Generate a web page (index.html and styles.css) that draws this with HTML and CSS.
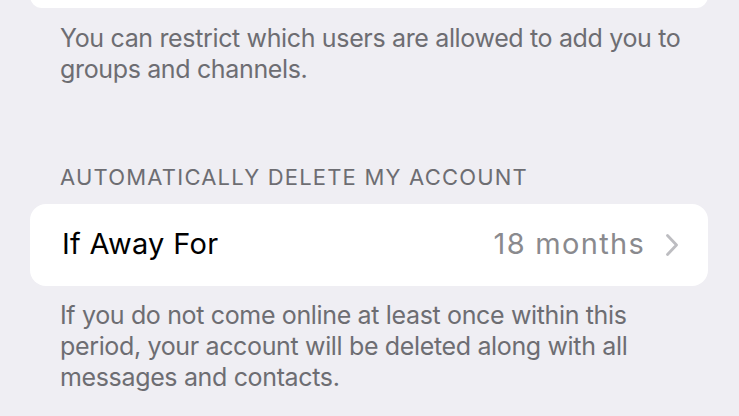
FILE: index.html
```html
<!DOCTYPE html>
<html>
<head>
<meta charset="utf-8">
<link rel="stylesheet" href="styles.css">
</head>
<body>
<div class="page">
  <div class="card card-top"></div>
  <p class="footer footer-top">You can restrict which users are allowed to add you to groups and channels.</p>
  <div class="header">AUTOMATICALLY DELETE MY ACCOUNT</div>
  <div class="card row">
    <span class="label">If Away For</span>
    <span class="value">18 months</span>
    <svg class="chevron" width="15" height="24" viewBox="0 0 15 24"><path d="M2.5 2.5 L11.5 12 L2.5 21.5" fill="none" stroke="#bdbdc1" stroke-width="2.8" stroke-linecap="round" stroke-linejoin="round"/></svg>
  </div>
  <p class="footer footer-bottom">If you do not come online at least once within this period, your account will be deleted along with all messages and contacts.</p>
</div>
</body>
</html>
```
FILE: styles.css
```css
html, body {
  margin: 0;
  padding: 0;
  background: #efeef3;
  font-family: Inter, "Noto Sans", sans-serif;
}
.page {
  padding: 0 31px 0 30px;
  display: flex;
  flex-direction: column;
}
.card {
  background: #ffffff;
  border-radius: 16px;
}
.card-top {
  height: 24px;
  margin-top: -16px;
}
.footer {
  margin: 0;
  padding: 0 30px;
  color: #6d6d72;
  font-size: 25px;
  line-height: 30.5px;
  letter-spacing: -0.35px;
}
.footer-top {
  margin-top: 15px;
  width: 640px;
}
.header {
  margin-top: 80px;
  padding: 0 30px;
  color: #6d6d72;
  font-size: 22px;
  line-height: 26px;
  letter-spacing: 1.2px;
}
.row {
  margin-top: 14px;
  height: 82px;
  display: flex;
  align-items: center;
  padding: 0 28px 0 32px;
}
.label {
  flex: 1;
  font-size: 29px;
  color: #000;
  letter-spacing: 0.3px;
  margin-top: -3px;
}
.value {
  font-size: 29px;
  color: #8a8a8e;
  letter-spacing: 1.3px;
  margin-top: -3px;
}
.chevron {
  margin-left: 20px;
}
.footer-bottom {
  margin-top: 14px;
  width: 600px;
  line-height: 31px;
}
```
